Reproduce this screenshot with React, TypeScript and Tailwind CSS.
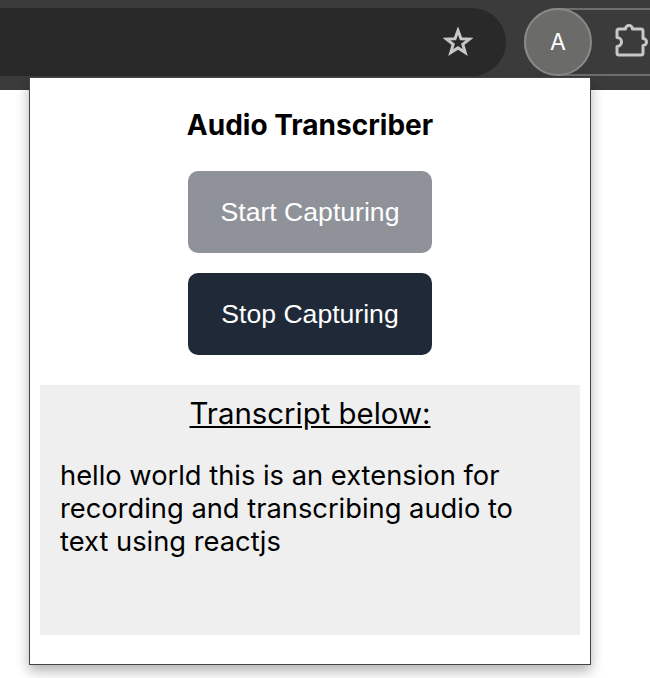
function StarIcon() {
  return (
    <svg width="30" height="30" viewBox="0 0 30 30" fill="none" stroke="#c7c7c7" strokeWidth="3" strokeLinejoin="miter">
      <path d="M15 3.6 18 11.7 26.6 12.1 19.8 17.4 22.2 25.6 15 20.9 7.8 25.6 10.2 17.4 3.4 12.1 12 11.7Z" />
    </svg>
  );
}

// square body with a knob on top and on the right, notch on the left
function PuzzleIcon() {
  return (
    <svg width="36" height="36" viewBox="0 0 36 36" fill="none" stroke="#c7c7c7" strokeWidth="3" strokeLinejoin="round">
      <path d="M5 7H11.5A3.5 3.5 0 0 1 18.5 7H27A2 2 0 0 1 29 9V16.5A3.5 3.5 0 0 1 29 23.5V31A2 2 0 0 1 27 33H5A2 2 0 0 1 3 31V24.5A4.5 4.5 0 0 0 3 15.5V9A2 2 0 0 1 5 7Z" />
    </svg>
  );
}

function Toolbar() {
  return (
    <div className="h-[90px] bg-[#3b3b3b] pt-2">
      <div className="flex h-[68px] items-center">
        <div className="flex h-full w-[506px] items-center justify-end rounded-r-[34px] bg-[#292929] pr-[33px]">
          <StarIcon />
        </div>
        <div className="ml-[18px] flex h-full flex-1 items-center rounded-l-[34px] border-y-2 border-l-2 border-[#6e6e6c]">
          <div className="-ml-[2px] flex h-[68px] w-[68px] items-center justify-center rounded-full border-2 border-[#8a8a88] bg-[#6b6b69] font-['Inter',sans-serif] text-[23px] font-normal text-white">
            A
          </div>
          <div className="ml-[22px] -translate-y-[2px]">
            <PuzzleIcon />
          </div>
        </div>
      </div>
    </div>
  );
}

export default function App() {
  return (
    <div className="relative h-[678px] w-[650px] overflow-hidden bg-white font-['Liberation_Sans',sans-serif]">
      <Toolbar />

      <div className="absolute left-[29px] top-[77px] flex h-[588px] w-[562px] flex-col items-center border border-[#444444] bg-white px-[10px] shadow-[0_6px_12px_rgba(0,0,0,0.3)]">
        <h1 className="mt-[30px] font-['Inter',sans-serif] text-[28px] font-bold leading-[34px] text-black">
          Audio Transcriber
        </h1>
        <button className="mt-[29px] h-[82px] w-[244px] rounded-[10px] bg-[#8f9399] pt-[2px] text-[26.6px] text-white">
          Start Capturing
        </button>
        <button className="mt-5 h-[82px] w-[244px] rounded-[10px] bg-[#1f2937] pt-[2px] text-[26.6px] text-white">
          Stop Capturing
        </button>
        <div className="mt-[30px] h-[250px] w-full bg-[#efefef] px-5 font-['Inter',sans-serif] text-[27.3px] leading-[33px] text-black">
          <h2 className="pt-[12px] text-center text-[29.4px] font-[430] underline">Transcript below:</h2>
          <p className="mt-[29px]">
            hello world this is an extension for recording and transcribing audio to text using reactjs
          </p>
        </div>
      </div>
    </div>
  );
}
